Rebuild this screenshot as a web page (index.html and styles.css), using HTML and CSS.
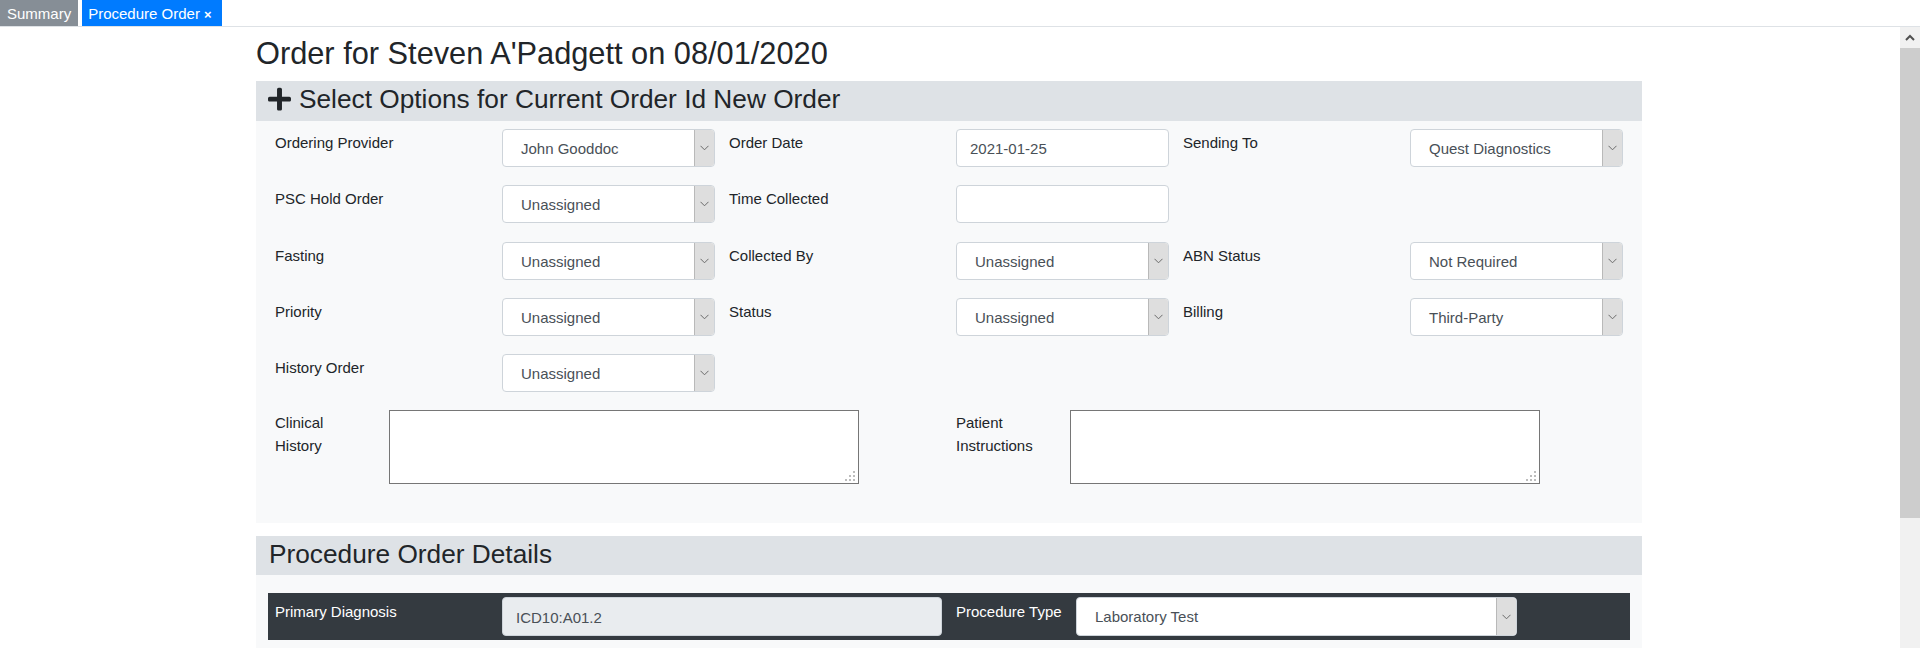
FILE: index.html
```html
<!DOCTYPE html>
<html lang="en">
<head>
<meta charset="utf-8">
<title>Procedure Order</title>
<link rel="stylesheet" href="styles.css">
</head>
<body>
<nav class="tabs">
  <a class="tab tab-muted">Summary</a>
  <a class="tab tab-active">Procedure Order <span class="tab-close">×</span></a>
</nav>
<div class="frame">
  <main class="page">
    <div class="container">
      <h2 class="title">Order for Steven A'Padgett on 08/01/2020</h2>

      <section class="panel">
        <h3 class="panel-head"><svg class="icon-plus" viewBox="0 0 448 512"><path d="M416 208H272V64c0-17.670-14.330-32-32-32h-32c-17.670 0-32 14.330-32 32v144H32c-17.670 0-32 14.330-32 32v32c0 17.670 14.330 32 32 32h144v144c0 17.670 14.330 32 32 32h32c17.670 0 32-14.330 32-32V304h144c17.670 0 32-14.330 32-32v-32c0-17.670-14.330-32-32-32z"/></svg>Select Options for Current Order Id New Order</h3>
        <div class="panel-body">
          <div class="form-row">
            <label class="lbl">Ordering Provider</label>
            <div class="ctl"><div class="sel"><span class="sel-text">John Gooddoc</span><span class="sel-btn"><svg width="9" height="6" viewBox="0 0 9 6"><polyline points="0.5,0.8 4.5,4.8 8.5,0.8"/></svg></span></div></div>
            <label class="lbl">Order Date</label>
            <div class="ctl"><input class="input" type="text" value="2021-01-25"></div>
            <label class="lbl">Sending To</label>
            <div class="ctl"><div class="sel"><span class="sel-text">Quest Diagnostics</span><span class="sel-btn"><svg width="9" height="6" viewBox="0 0 9 6"><polyline points="0.5,0.8 4.5,4.8 8.5,0.8"/></svg></span></div></div>
          </div>
          <div class="form-row">
            <label class="lbl">PSC Hold Order</label>
            <div class="ctl"><div class="sel"><span class="sel-text">Unassigned</span><span class="sel-btn"><svg width="9" height="6" viewBox="0 0 9 6"><polyline points="0.5,0.8 4.5,4.8 8.5,0.8"/></svg></span></div></div>
            <label class="lbl">Time Collected</label>
            <div class="ctl"><input class="input" type="text" value=""></div>
          </div>
          <div class="form-row">
            <label class="lbl">Fasting</label>
            <div class="ctl"><div class="sel"><span class="sel-text">Unassigned</span><span class="sel-btn"><svg width="9" height="6" viewBox="0 0 9 6"><polyline points="0.5,0.8 4.5,4.8 8.5,0.8"/></svg></span></div></div>
            <label class="lbl">Collected By</label>
            <div class="ctl"><div class="sel"><span class="sel-text">Unassigned</span><span class="sel-btn"><svg width="9" height="6" viewBox="0 0 9 6"><polyline points="0.5,0.8 4.5,4.8 8.5,0.8"/></svg></span></div></div>
            <label class="lbl">ABN Status</label>
            <div class="ctl"><div class="sel"><span class="sel-text">Not Required</span><span class="sel-btn"><svg width="9" height="6" viewBox="0 0 9 6"><polyline points="0.5,0.8 4.5,4.8 8.5,0.8"/></svg></span></div></div>
          </div>
          <div class="form-row">
            <label class="lbl">Priority</label>
            <div class="ctl"><div class="sel"><span class="sel-text">Unassigned</span><span class="sel-btn"><svg width="9" height="6" viewBox="0 0 9 6"><polyline points="0.5,0.8 4.5,4.8 8.5,0.8"/></svg></span></div></div>
            <label class="lbl">Status</label>
            <div class="ctl"><div class="sel"><span class="sel-text">Unassigned</span><span class="sel-btn"><svg width="9" height="6" viewBox="0 0 9 6"><polyline points="0.5,0.8 4.5,4.8 8.5,0.8"/></svg></span></div></div>
            <label class="lbl">Billing</label>
            <div class="ctl"><div class="sel"><span class="sel-text">Third-Party</span><span class="sel-btn"><svg width="9" height="6" viewBox="0 0 9 6"><polyline points="0.5,0.8 4.5,4.8 8.5,0.8"/></svg></span></div></div>
          </div>
          <div class="form-row">
            <label class="lbl">History Order</label>
            <div class="ctl"><div class="sel"><span class="sel-text">Unassigned</span><span class="sel-btn"><svg width="9" height="6" viewBox="0 0 9 6"><polyline points="0.5,0.8 4.5,4.8 8.5,0.8"/></svg></span></div></div>
          </div>
          <div class="text-row">
            <div class="lbl-cell"><label class="lbl lbl-wrap">Clinical History</label></div>
            <div class="ctl"><div class="ta"><textarea></textarea><svg class="grip" width="11" height="11" viewBox="0 0 11 11"><rect x="8" y="0" width="2" height="2"/><rect x="4" y="4" width="2" height="2"/><rect x="8" y="4" width="2" height="2"/><rect x="0" y="8" width="2" height="2"/><rect x="4" y="8" width="2" height="2"/><rect x="8" y="8" width="2" height="2"/></svg></div></div>
            <div class="lbl-cell"><label class="lbl lbl-wrap">Patient Instructions</label></div>
            <div class="ctl"><div class="ta"><textarea></textarea><svg class="grip" width="11" height="11" viewBox="0 0 11 11"><rect x="8" y="0" width="2" height="2"/><rect x="4" y="4" width="2" height="2"/><rect x="8" y="4" width="2" height="2"/><rect x="0" y="8" width="2" height="2"/><rect x="4" y="8" width="2" height="2"/><rect x="8" y="8" width="2" height="2"/></svg></div></div>
          </div>
        </div>
      </section>

      <section class="panel panel-details">
        <h3 class="panel-head">Procedure Order Details</h3>
        <div class="panel-body">
          <div class="dark-row">
            <label class="lbl">Primary Diagnosis</label>
            <div class="ctl"><input class="input input-readonly" type="text" value="ICD10:A01.2" readonly></div>
            <label class="lbl">Procedure Type</label>
            <div class="ctl"><div class="sel"><span class="sel-text">Laboratory Test</span><span class="sel-btn"><svg width="9" height="6" viewBox="0 0 9 6"><polyline points="0.5,0.8 4.5,4.8 8.5,0.8"/></svg></span></div></div>
          </div>
        </div>
      </section>
    </div>
  </main>
  <div class="scrollbar">
    <div class="sb-up"><svg width="10" height="7" viewBox="0 0 10 7"><polyline points="1,6 5,2 9,6"/></svg></div>
    <div class="sb-thumb"></div>
  </div>
</div>
</body>
</html>
```

FILE: styles.css
```css
* { box-sizing: border-box; }

html, body {
  margin: 0;
  height: 648px;
}

body {
  font-family: "Liberation Sans", Arial, sans-serif;
  font-size: 15px;
  line-height: 1.5;
  color: #212529;
  background: #fff;
  overflow: hidden;
}

/* tabs */
.tabs {
  display: flex;
  gap: 4px;
  height: 27px;
  border-bottom: 1px solid #dee2e6;
}

.tab {
  height: 26px;
  padding: 3px 7px 0;
  line-height: 22.5px;
  color: #fff;
  text-decoration: none;
  white-space: nowrap;
}

.tab-muted { background: #868e96; }

.tab-active {
  background: #007bff;
  padding-left: 6px;
  padding-right: 10px;
}

.tab-close {
  font-weight: bold;
  font-size: 13px;
}

/* frame + scrollbar */
.frame {
  display: flex;
  height: 621px;
}

.page {
  flex: 1;
  min-width: 0;
  overflow: hidden;
}

.scrollbar {
  flex: none;
  width: 20px;
  background: #f1f1f1;
}

.sb-up {
  height: 21px;
  display: flex;
  align-items: center;
  justify-content: center;
}

.sb-up polyline {
  fill: none;
  stroke: #505050;
  stroke-width: 2;
}

.sb-thumb {
  height: 470px;
  background: #cdcdcd;
}

/* content */
.container {
  width: 1386px;
  margin-left: 256px;
}

.title {
  margin: 9px 0;
  font-size: 30.75px;
  font-weight: normal;
  line-height: 36px;
}

.panel-head {
  margin: 0;
  height: 40px;
  padding: 3px 12px 0;
  background: #dee2e6;
  font-size: 26.25px;
  font-weight: normal;
  line-height: 31.5px;
  white-space: nowrap;
}

.icon-plus {
  width: 23px;
  height: 26.25px;
  vertical-align: -4px;
  margin-right: 8px;
  fill: #212529;
}

.panel-body {
  background: #f8f9fa;
  padding: 8px 12px 39px;
}

.panel-details {
  margin-top: 13px;
}

.panel-details .panel-head {
  height: 39px;
  padding-left: 13px;
}

.panel-details .panel-body {
  padding-top: 18px;
  height: 200px;
}

.form-row {
  display: grid;
  grid-template-columns: repeat(6, 227px);
  height: 38px;
  margin-bottom: 18.25px;
}

.form-row > *,
.text-row > *,
.dark-row > * {
  padding-left: 7px;
  padding-right: 7px;
}

.lbl {
  display: block;
  padding-top: 3px;
  line-height: 22.5px;
}

.text-row .lbl {
  padding-top: 2px;
}

.lbl-wrap {
  width: min-content;
}

/* select look-alike */
.sel {
  position: relative;
  height: 38px;
  border: 1px solid #ced4da;
  border-radius: 4px;
  background: #fff;
  color: #495057;
  padding-left: 18px;
  line-height: 37px;
  white-space: nowrap;
  overflow: hidden;
}

.sel-btn {
  position: absolute;
  top: 0;
  right: 0;
  bottom: 0;
  width: 20px;
  background: #dedede;
  border-left: 1px solid #b9b9b9;
  display: flex;
  align-items: center;
  justify-content: center;
}

.sel-btn polyline {
  fill: none;
  stroke: #6b6b6b;
  stroke-width: 1;
}

.input {
  display: block;
  width: 100%;
  height: 38px;
  border: 1px solid #ced4da;
  border-radius: 4px;
  background: #fff;
  padding: 1px 13px 0;
  font: inherit;
  color: #495057;
  outline: none;
}

.input-readonly {
  background: #e9ecef;
}

/* textareas */
.text-row {
  display: grid;
  grid-template-columns: 113.5px 567.5px 113.5px 567.5px;
  height: 74px;
}

.ta {
  position: relative;
  width: 470px;
  height: 74px;
}

.ta textarea {
  display: block;
  width: 100%;
  height: 100%;
  border: 1px solid #767676;
  border-radius: 0;
  background: #fff;
  resize: none;
  font: inherit;
  outline: none;
}

.grip {
  position: absolute;
  right: 3px;
  bottom: 2px;
  fill: #bdbdbd;
}

/* dark details row */
.dark-row {
  display: grid;
  grid-template-columns: 227px 454px 120px 455px;
  padding: 4px 0;
  background: #343a40;
  color: #fff;
}

.dark-row .lbl {
  padding-top: 4px;
}

.dark-row .input,
.dark-row .sel {
  height: 39px;
}

.dark-row .sel {
  line-height: 38px;
}
```
